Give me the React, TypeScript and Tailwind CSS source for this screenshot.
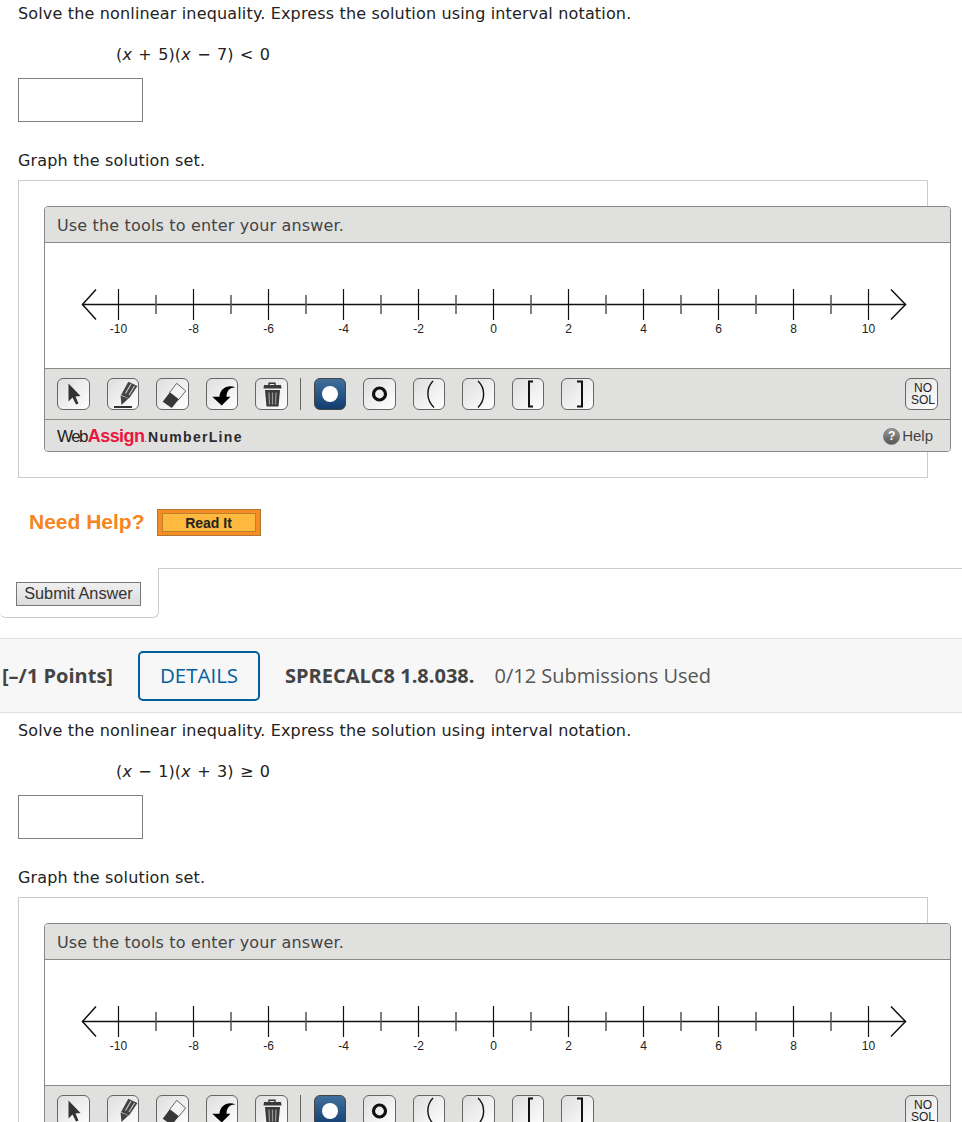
import React from 'react';

const body = { fontFamily: '"DejaVu Sans", Verdana, sans-serif' };
const arial = '[font-family:"Liberation_Sans",Arial,sans-serif]';

const ticks = Array.from({ length: 21 }, (_, i) => i - 10);

function NumberLine() {
  return (
    <svg width="905" height="125" viewBox="0 0 905 125" className="block">
      <g transform="translate(-45 -243)" stroke="#111" fill="none">
        <path d="M82 304.5H906" strokeWidth="1.5" />
        <path d="M96 289.5L82.5 304.5L96 319.5M891 289.5L905.5 304.5L891 319.5" strokeWidth="1.5" />
        {ticks.map((t) => {
          const x = 118.5 + (t + 10) * 37.5;
          return t % 2 === 0 ? (
            <path key={t} d={`M${x} 289V320`} strokeWidth="1.2" />
          ) : (
            <path key={t} d={`M${x} 295V314`} strokeWidth="1.5" stroke="#555" />
          );
        })}
        {ticks.filter((t) => t % 2 === 0).map((t) => (
          <text
            key={t}
            x={118.5 + (t + 10) * 37.5}
            y="332.5"
            textAnchor="middle"
            fontSize="12"
            fill="#222"
            stroke="none"
            fontFamily='"Liberation Sans", Arial, sans-serif'
          >
            {t}
          </text>
        ))}
      </g>
    </svg>
  );
}

// icon coordinates are measured from the outer edge of the button, so the viewBox skips the 1px border
function ToolButton({ w = 33, children }: { w?: number; children?: React.ReactNode }) {
  return (
    <div
      className={`h-[32px] shrink-0 rounded-[6px] border border-[#666] bg-gradient-to-br from-[#dedede] to-white ${w === 33 ? 'w-[33px]' : 'w-[32px]'}`}
    >
      <svg width="100%" height="100%" viewBox={w === 33 ? '1 1 31 30' : '1 1 30 30'} className="block">
        {children}
      </svg>
    </div>
  );
}

function Toolbar() {
  return (
    <div className="flex h-[51px] items-start justify-between border-b border-[#888] bg-[#e0e0df] px-[12px] pt-[9px]">
      <div className="flex items-center gap-[17px]">
        <ToolButton>
          <path d="M11.5 5.5V23.5L15.5 19.5L19 26.5L21.5 25.5L18.5 18.5L23.5 18Z" fill="#333" />
        </ToolButton>
        <ToolButton w={32}>
          <path d="M14.5 27L13.5 17.5L21.5 20.5Z" fill="#444" />
          <path d="M14 17L21.3 3.7L30.5 8L22 20.5Z" fill="#444" />
          <path d="M18.5 15.5L24 6M22 17L27.5 8" stroke="#ccc" strokeWidth="1.1" />
          <path d="M7 29H25" stroke="#333" strokeWidth="2" />
        </ToolButton>
        <ToolButton>
          <path d="M13.7 14.5L20.7 5.3L29.7 13L22.7 21.5Z" fill="#f4f4f4" stroke="#666" />
          <path d="M6.7 23.7L13.7 14.5L22.7 21.5L15.7 30Z" fill="#383838" />
        </ToolButton>
        <ToolButton w={32}>
          <path d="M15.7 27.5L6.3 18.7H13.5C13.5 11 22 5.5 29.5 9.5C25 9 20.5 12 20.5 18.7H24.5Z" fill="#000" />
        </ToolButton>
        <ToolButton>
          <path d="M14 7V5.2H20V7" fill="none" stroke="#333" strokeWidth="1.4" />
          <path d="M9 7H26L26.5 10.5H8.5Z" fill="#3a3a3a" />
          <path d="M10 12H25L23.5 28.5H11.5Z" fill="#3a3a3a" />
          <path d="M14 14.5L14.5 26.5M17.5 14.5V26.5M21 14.5L20.5 26.5" stroke="#999" strokeWidth="1.3" />
        </ToolButton>
        <div className="-ml-[5px] -mr-[4px] h-[32px] w-px bg-[#666]" />
        <div className="flex h-[32px] w-[32px] shrink-0 items-center justify-center rounded-[6px] border border-[#444] bg-gradient-to-b from-[#41709c] to-[#113e70]">
          <div className="h-[16px] w-[16px] rounded-full bg-white" />
        </div>
        <ToolButton>
          <circle cx="16.5" cy="16" r="6" fill="none" stroke="#111" strokeWidth="3.2" />
        </ToolButton>
        <ToolButton w={32}>
          <path d="M20 3C13 10 13 22 21 29.5" fill="none" stroke="#111" strokeWidth="1.4" />
        </ToolButton>
        <ToolButton>
          <path d="M16 3C23.5 10 23.5 22 16 29.5" fill="none" stroke="#111" strokeWidth="1.4" />
        </ToolButton>
        <ToolButton w={32}>
          <path d="M21 3.5H17V28.5H21" fill="none" stroke="#111" strokeWidth="2" />
        </ToolButton>
        <ToolButton>
          <path d="M16 3.5H21V28.5H16" fill="none" stroke="#111" strokeWidth="2" />
        </ToolButton>
      </div>
      <div className={`flex h-[32px] w-[33px] flex-col items-center justify-center rounded-[6px] border border-[#666] bg-gradient-to-br from-[#dedede] to-white pl-[3px] text-[12px] leading-[12px] text-[#222] ${arial}`}>
        <span>NO</span>
        <span>SOL</span>
      </div>
    </div>
  );
}

function Widget() {
  return (
    <div className="ml-[25px] mt-[25px] w-[907px] overflow-hidden rounded-[4px] border border-[#888]">
      <div className="flex h-[36px] items-center border-b border-[#888] bg-[#e0e0df] pl-[12px] pt-[2px] text-[16px] tracking-[0.16px] text-[#444]">
        Use the tools to enter your answer.
      </div>
      <div className="h-[126px] border-b border-[#888] bg-white">
        <NumberLine />
      </div>
      <Toolbar />
      <div className={`flex h-[31px] items-center justify-between bg-[#e0e0df] pl-[12px] pr-[17px] pt-[1px] ${arial}`}>
        <div className="flex items-baseline">
          <span className="text-[17px] tracking-[-1.6px] text-[#222]">Web</span>
          <span className="ml-[1px] text-[18px] font-bold tracking-[-0.6px] text-[#e8173f]">Assign</span>
          <span className="text-[10px] text-[#e8173f]">.</span>
          <span className="ml-[1px] text-[14px] font-bold tracking-[1.3px] text-[#2b2b2b]">NumberLine</span>
        </div>
        <div className="flex items-center gap-[2px] text-[15px] text-[#444]">
          <div className="flex h-[17px] w-[17px] items-center justify-center rounded-full border border-[#777] bg-gradient-to-b from-[#999] to-[#555] text-[12px] font-bold text-white">
            ?
          </div>
          Help
        </div>
      </div>
    </div>
  );
}

function Question({ a, op, b, sign, first, second }: { a: string; op: string; b: string; sign: string; first: string; second: string }) {
  return (
    <div className="pl-[18px]" style={body}>
      <div className="h-[26px] text-[16px] leading-[28px] tracking-[0.16px] text-[#222]">
        Solve the nonlinear inequality. Express the solution using interval notation.
      </div>
      <div className="mt-[15px] h-[26px] whitespace-pre pl-[98px] text-[16px] leading-[28px] tracking-[0.16px] [word-spacing:1px] text-[#222]">
        (<i>x</i> {a} {first})(<i>x</i> {op} {second}) {sign} {b}
      </div>
      <div className="mt-[11px] h-[44px] w-[125px] border border-[#808080] bg-white" />
      <div className="mt-[25px] h-[26px] text-[16px] leading-[28px] tracking-[0.16px] text-[#222]">Graph the solution set.</div>
      <div className="mt-[7px] h-[298px] w-[910px] border border-[#ccc]">
        <Widget />
      </div>
    </div>
  );
}

export default function App() {
  return (
    <div className="h-[1122px] w-[962px] overflow-hidden bg-white">
      <Question a="+" first="5" op="−" second="7" sign="<" b="0" />

      {/* Need Help */}
      <div className={`mt-[31px] flex h-[27px] items-center pl-[29px] ${arial}`}>
        <span className="pb-[2px] text-[21px] font-bold text-[#f5861f]">Need Help?</span>
        <div className="ml-[12px] flex h-[27px] w-[104px] items-center justify-center border border-[#b0763a] bg-[#f58d22]">
          <div className="flex h-[19px] w-[94px] items-center justify-center border border-[#b8802f] bg-[#ffb93e] pt-px text-[14px] font-bold text-[#222]">
            Read It
          </div>
        </div>
      </div>

      {/* Submit */}
      <div className="mt-[32px] flex h-[50px]">
        <div className="h-[50px] w-[159px] shrink-0 rounded-b-[6px] border-b border-r border-[#ccc] pl-[16px] pt-[14px]">
          <div className={`flex h-[24px] w-[125px] items-center justify-center border border-[#777] bg-gradient-to-b from-[#f0f0f0] to-[#dcdcdc] pb-px text-[16.3px] text-[#333] ${arial}`}>
            Submit Answer
          </div>
        </div>
        <div className="h-px flex-1 bg-[#ccc]" />
      </div>

      {/* Question header */}
      <div className="mt-[20px] flex h-[75px] items-center border-y border-[#e0e0e0] bg-[#f7f7f7] pl-[2px] font-['Open_Sans',sans-serif] text-[20px]">
        <span className="w-[136px] font-bold text-[#444]">[–/1 Points]</span>
        <div className="flex h-[50px] w-[122px] items-center justify-center rounded-[5px] border-2 border-[#00609c] text-[20.5px] font-medium text-[#00609c]">
          DETAILS
        </div>
        <span className="ml-[25px] font-bold text-[#444]">SPRECALC8 1.8.038.</span>
        <span className="ml-[20px] text-[#555]">0/12 Submissions Used</span>
      </div>

      <div className="mt-[4px]">
        <Question a="−" first="1" op="+" second="3" sign="≥" b="0" />
      </div>
    </div>
  );
}
